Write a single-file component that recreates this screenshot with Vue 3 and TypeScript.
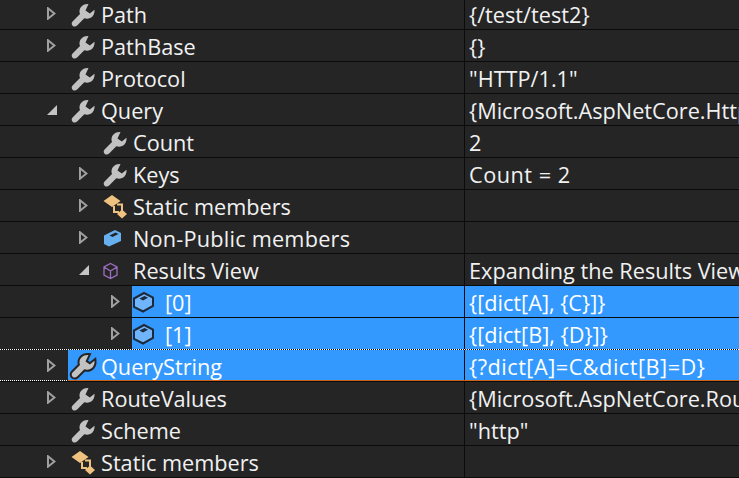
<script setup lang="ts">
type Icon = 'wrench' | 'static' | 'cube' | 'results' | 'cubeSel'
type Row = {
  name: string
  value: string
  depth: number
  arrow?: 'closed' | 'open'
  icon: Icon
  state?: 'selected' | 'current'
  wide?: 'name' | 'value'
}

const rows: Row[] = [
  { name: 'Path', value: '{/test/test2}', depth: 0, arrow: 'closed', icon: 'wrench' },
  { name: 'PathBase', value: '{}', depth: 0, arrow: 'closed', icon: 'wrench' },
  { name: 'Protocol', value: '"HTTP/1.1"', depth: 0, icon: 'wrench' },
  { name: 'Query', value: '{Microsoft.AspNetCore.Http.Internal.QueryCollection}', depth: 0, arrow: 'open', icon: 'wrench' },
  { name: 'Count', value: '2', depth: 1, icon: 'wrench' },
  { name: 'Keys', value: 'Count = 2', depth: 1, arrow: 'closed', icon: 'wrench', wide: 'value' },
  { name: 'Static members', value: '', depth: 1, arrow: 'closed', icon: 'static' },
  { name: 'Non-Public members', value: '', depth: 1, arrow: 'closed', icon: 'cube', wide: 'name' },
  { name: 'Results View', value: 'Expanding the Results View will enumerate', depth: 1, arrow: 'open', icon: 'results' },
  { name: '[0]', value: '{[dict[A], {C}]}', depth: 2, arrow: 'closed', icon: 'cubeSel', state: 'selected' },
  { name: '[1]', value: '{[dict[B], {D}]}', depth: 2, arrow: 'closed', icon: 'cubeSel', state: 'selected' },
  { name: 'QueryString', value: '{?dict[A]=C&dict[B]=D}', depth: 0, arrow: 'closed', icon: 'wrench', state: 'current', wide: 'value' },
  { name: 'RouteValues', value: '{Microsoft.AspNetCore.Routing.RouteValueDictionary}', depth: 0, arrow: 'closed', icon: 'wrench' },
  { name: 'Scheme', value: '"http"', depth: 0, icon: 'wrench' },
  { name: 'Static members', value: '', depth: 0, arrow: 'closed', icon: 'static' },
]

const wrenchPath =
  'M17.500 1C12.500 .5 8.500 3.800 8.500 8.500c0 .9.2 1.700.5 2.500L1.800 18.200c-1.700 1.700-1.200 3.500-.2 4.500s2.900 1.400 4.500-.2L13.300 15.300c.9.300 1.800.5 2.700.5 4.700 0 8-4 7.500-9L18.800 10.500 14.500 7.500z'
</script>

<template>
  <div class="tree">
    <div
      v-for="(row, i) in rows"
      :key="i"
      class="row"
      :class="row.state"
    >
      <div class="name-cell" :class="`depth-${row.depth}`">
        <span class="arrow-slot">
          <svg v-if="row.arrow === 'closed'" width="9" height="13" viewBox="0 0 9 13">
            <path d="M1 1.300 7.400 6.500 1 11.700z" fill="none" stroke="#a0a0a0" stroke-width="2" />
          </svg>
          <svg v-else-if="row.arrow === 'open'" width="10" height="10" viewBox="0 0 10 10">
            <path d="M10 0V10H0z" fill="#c4c4c4" />
          </svg>
        </span>
        <span class="body">
          <svg v-if="row.icon === 'wrench'" class="icon wrench" width="24" height="24" viewBox="0 0 24 24">
            <path :d="wrenchPath" fill="#c2c2c2" />
          </svg>
          <svg v-else-if="row.icon === 'static'" class="icon" width="24" height="24" viewBox="0 0 24 24">
            <path d="M9 0 17.500 6 9 12 .5 6zM19 14.500l5 4.500-5 4.500-5-4.500z" fill="#f0c27f" />
            <path d="M14 9.500h5v6M11 11v6h5" fill="none" stroke="#f0c27f" stroke-width="2" />
          </svg>
          <svg v-else-if="row.icon === 'cube'" class="icon" width="24" height="24" viewBox="0 0 24 24">
            <path d="M1 8.500 12 3 18 6V14L6 19.500 1 17z" fill="#66b0f0" />
            <path d="M6.500 8.500 12.500 5.500 15.500 7 9.500 10z" fill="#252526" />
          </svg>
          <svg v-else-if="row.icon === 'results'" class="icon" width="24" height="24" viewBox="0 0 24 24">
            <path d="M7.500 4.500 14 8V16L7.500 19.500 1 16V8zM1 8l6.500 4L14 8M7.500 12v7.500" fill="none" stroke="#9d6fc2" stroke-width="1.300" />
          </svg>
          <svg v-else class="icon cube-sel" width="24" height="24" viewBox="0 0 24 24">
            <path d="M1 7.500 11 2 20 6.500V15L10 20.500 1 16z" fill="#70b5fb" stroke="#1e2a3a" stroke-width="2" />
            <path d="M6.500 7.500 11.500 5 15 6.800 10 9.500z" fill="#1e2a3a" />
          </svg>
          <span class="label" :class="{ 'wide-name': row.wide === 'name' }">{{ row.name }}</span>
        </span>
      </div>
      <div class="value-cell" :class="{ 'wide-value': row.wide === 'value' }">{{ row.value }}</div>
    </div>
  </div>
</template>

<style>
html,
body {
  margin: 0;
  background: #252526;
  overflow: hidden;
}
</style>

<style scoped>
.tree {
  width: 739px;
  height: 478px;
  overflow: hidden;
  background: #252526;
  color: #f1f1f1;
  font-family: "Open Sans", "Noto Sans", sans-serif;
  font-size: 21.7px;
}

.tree > .row:first-child {
  margin-top: -2px;
}

.row {
  display: flex;
  height: 32px;
  box-sizing: border-box;
  border-bottom: 1px solid #0b0b0b;
}

.name-cell {
  width: 464px;
  flex-shrink: 0;
  display: flex;
  align-items: center;
  box-sizing: border-box;
}

.depth-0 {
  padding-left: 46px;
}

.depth-1 {
  padding-left: 78px;
}

.depth-2 {
  padding-left: 110px;
}

.arrow-slot {
  width: 22px;
  height: 30px;
  padding-left: 1px;
  box-sizing: border-box;
  flex-shrink: 0;
  display: flex;
  align-items: center;
}

.body {
  flex: 1;
  height: 100%;
  display: flex;
  align-items: center;
  gap: 6px;
}

.icon {
  flex-shrink: 0;
  margin-left: 3px;
  margin-top: 2px;
  overflow: visible;
}

.cube-sel {
  margin-left: 1px;
  margin-right: 2px;
}

.current .wrench path {
  stroke: #252526;
  stroke-width: 4px;
  paint-order: stroke;
}

.label {
  white-space: nowrap;
  position: relative;
  top: 1px;
}

.wide-name {
  letter-spacing: 0.22px;
}

.value-cell {
  flex: 1;
  min-width: 0;
  padding-left: 4px;
  border-left: 1px solid #0b0b0b;
  line-height: 33px;
  white-space: nowrap;
  overflow: hidden;
}

.wide-value {
  letter-spacing: 0.5px;
}

.selected .body,
.selected .value-cell,
.current .body,
.current .value-cell {
  background: #3399ff;
  color: #fff;
}

.current {
  margin-top: -1px;
  margin-bottom: 1px;
  border-top: 1px dotted #fff;
  border-bottom: 1px dotted #fff;
  box-shadow: 0 1px 0 #0b0b0b;
}

.current .body,
.current .value-cell {
  box-shadow: 0 1px 0 #c8641e;
}
</style>
